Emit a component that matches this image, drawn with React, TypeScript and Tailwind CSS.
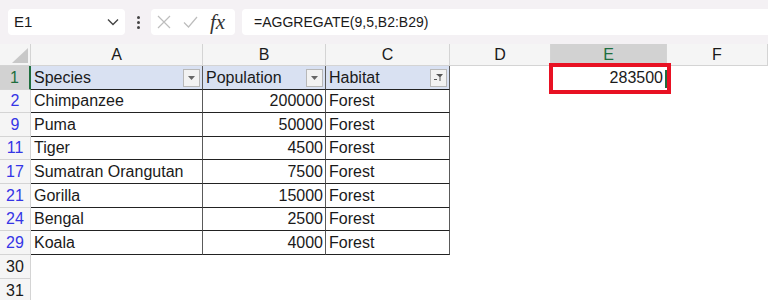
import React from 'react';

const cols = [
  { key: 'A', w: 'w-[172px]' },
  { key: 'B', w: 'w-[123px]' },
  { key: 'C', w: 'w-[124px]' },
  { key: 'D', w: 'w-[101px]' },
  { key: 'E', w: 'w-[116px]' },
  { key: 'F', w: 'flex-1' },
];

const rows = [
  { n: '2', species: 'Chimpanzee', pop: '200000', h: 'h-[23px]' },
  { n: '9', species: 'Puma', pop: '50000', h: 'h-[24px]' },
  { n: '11', species: 'Tiger', pop: '4500', h: 'h-[23px]' },
  { n: '17', species: 'Sumatran Orangutan', pop: '7500', h: 'h-[24px]' },
  { n: '21', species: 'Gorilla', pop: '15000', h: 'h-[24px]' },
  { n: '24', species: 'Bengal', pop: '2500', h: 'h-[23px]' },
  { n: '29', species: 'Koala', pop: '4000', h: 'h-[24px]' },
];

const FilterButton = ({ active }: { active?: boolean }) => (
  <div className="w-[17px] h-[18px] bg-[#f2f2f2] border border-[#b8b8b8] flex items-center justify-center shrink-0">
    {active ? (
      <svg width="11" height="9" viewBox="0 0 11 9">
        <path d="M3 1h7L7.5 4v4h-1V4z" fill="#555" />
        <rect x="1" y="6" width="3" height="1" fill="#555" />
      </svg>
    ) : (
      <svg width="7" height="4" viewBox="0 0 7 4">
        <path d="M0 0h7L3.5 4z" fill="#666" />
      </svg>
    )}
  </div>
);

export default function App() {
  return (
    <div className="w-[768px] h-[300px] overflow-hidden bg-white text-[#1a1a1a]" style={{ fontFamily: '"Liberation Sans", Arial, sans-serif' }}>
      {/* formula toolbar */}
      <div className="h-[44px] bg-[#f4f1f4] flex items-center pl-[8px]">
        <div className="w-[117px] h-[26px] bg-white rounded-[4px] flex items-center justify-between pl-[6px] pr-[6px]">
          <span className="text-[15px]">E1</span>
          <svg width="12" height="8" viewBox="0 0 12 8">
            <path d="M1 1.5l5 5 5-5" stroke="#444" strokeWidth="1.4" fill="none" />
          </svg>
        </div>
        <div className="w-[26px] flex flex-col items-center gap-[2px]">
          <span className="w-[3px] h-[3px] bg-[#444] rounded-full" />
          <span className="w-[3px] h-[3px] bg-[#444] rounded-full" />
          <span className="w-[3px] h-[3px] bg-[#444] rounded-full" />
        </div>
        <div className="w-[84px] h-[26px] bg-white rounded-[4px] flex items-center pl-[6px] gap-[12px]">
          <svg width="14" height="14" viewBox="0 0 14 14">
            <path d="M1 1l12 12M13 1L1 13" stroke="#bdbdbd" strokeWidth="1.2" />
          </svg>
          <svg width="15" height="12" viewBox="0 0 15 12">
            <path d="M1 6.5l4.5 4.5L14 1" stroke="#bdbdbd" strokeWidth="1.2" fill="none" />
          </svg>
          <span className="text-[21px] italic leading-none text-[#333]" style={{ fontFamily: '"Liberation Serif", serif' }}>fx</span>
        </div>
        <div className="ml-[7px] flex-1 h-[26px] bg-white rounded-l-[4px] flex items-center pl-[12px]">
          <span className="text-[14px]">=AGGREGATE(9,5,B2:B29)</span>
        </div>
      </div>

      {/* column headers */}
      <div className="h-[22px] flex bg-[#f5f5f5] border-b border-[#d4d4d4]">
        <div className="w-[31px] border-r border-[#d4d4d4] flex items-end justify-end p-[2px]">
          <svg width="16" height="15" viewBox="0 0 16 15">
            <path d="M16 0v15H0z" fill="#c8c8c8" />
          </svg>
        </div>
        {cols.map((c) => (
          <div
            key={c.key}
            className={`${c.w} border-r border-[#d4d4d4] flex items-center justify-center text-[16px] ${c.key === 'E' ? 'bg-[#d2d2d2] text-[#1e6e3e]' : ''}`}
          >
            {c.key}
          </div>
        ))}
      </div>

      {/* row 1 */}
      <div className="h-[24px] flex text-[16px]">
        <div className="w-[31px] bg-[#d2d2d2] border-r-2 border-[#1e6e3e] flex items-center justify-center text-[#1e6e3e] border-b border-b-[#d4d4d4]">1</div>
        <div className="w-[172px] bg-[#d9e1f2] border-r border-b border-[#5a5a5a] border-b-[#222] flex items-center justify-between pl-[3px] pr-[2px]">
          <span>Species</span>
          <FilterButton />
        </div>
        <div className="w-[123px] bg-[#d9e1f2] border-r border-b border-[#5a5a5a] border-b-[#222] flex items-center justify-between pl-[3px] pr-[2px]">
          <span>Population</span>
          <FilterButton />
        </div>
        <div className="w-[124px] bg-[#d9e1f2] border-r border-b border-[#5a5a5a] border-b-[#222] flex items-center justify-between pl-[3px] pr-[2px]">
          <span>Habitat</span>
          <FilterButton active />
        </div>
        <div className="w-[101px]" />
        <div className="w-[116px] relative flex items-center justify-end pr-[4px]">
          <span>283500</span>
          <span className="absolute right-0 top-[4px] bottom-[2px] w-[2px] bg-[#1e6e3e]" />
          <div className="absolute -left-[2px] -right-[4px] -top-[3px] -bottom-[4px] border-[4px] border-[#e81123]" />
        </div>
        <div className="flex-1" />
      </div>

      {/* data rows */}
      {rows.map((r) => (
        <div key={r.n} className={`${r.h} flex text-[16px]`}>
          <div className="w-[31px] bg-[#f5f5f5] border-r border-b border-[#d4d4d4] flex items-center justify-center text-[#3535e6]">{r.n}</div>
          <div className="w-[172px] border-r border-b border-[#5a5a5a] border-b-[#222] flex items-center pl-[3px]">{r.species}</div>
          <div className="w-[123px] border-r border-b border-[#5a5a5a] border-b-[#222] flex items-center justify-end pr-[2px]">{r.pop}</div>
          <div className="w-[124px] border-r border-b border-[#5a5a5a] border-b-[#222] flex items-center pl-[3px]">Forest</div>
          <div className="flex-1" />
        </div>
      ))}

      {['30', '31'].map((n) => (
        <div key={n} className="h-[24px] flex text-[16px]">
          <div className="w-[31px] bg-[#f5f5f5] border-r border-b border-[#d4d4d4] flex items-center justify-center">{n}</div>
          <div className="flex-1" />
        </div>
      ))}
    </div>
  );
}
